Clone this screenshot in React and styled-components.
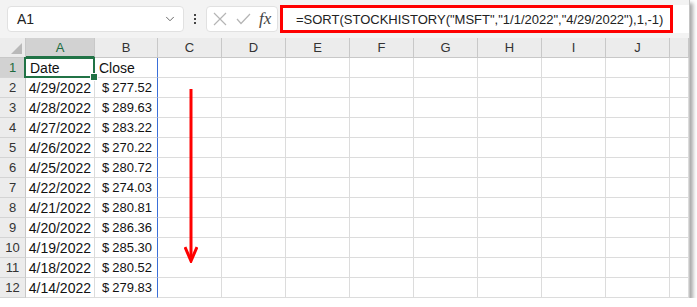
import React from 'react';
import styled, { createGlobalStyle } from 'styled-components';
import { ChevronDown } from 'lucide-react';

const GlobalStyle = createGlobalStyle`
  body {
    margin: 0;
    background: #ffffff;
    font-family: "Liberation Sans", Arial, sans-serif;
  }
`;

const Frame = styled.div`
  position: relative;
  width: 690px;
  height: 298px;
  overflow: hidden;
  background: #ffffff;
  border-right: 1px solid #c4c4c4;
  box-sizing: border-box;
  box-shadow: 3px 3px 4px rgba(0, 0, 0, 0.35);
`;

const Toolbar = styled.div`
  height: 38px;
  display: flex;
  align-items: center;
  background: #f3f3f3;
  padding-left: 7px;
  box-sizing: border-box;
`;

const NameBox = styled.div`
  width: 177px;
  height: 26px;
  box-sizing: border-box;
  background: #ffffff;
  border: 1px solid #e1e1e1;
  border-radius: 4px;
  display: flex;
  align-items: center;
  justify-content: space-between;
  padding: 0 6px 0 9px;
  font-size: 14px;
  color: #222;
`;

const Dots = styled.div`
  width: 22px;
  display: flex;
  flex-direction: column;
  align-items: center;
  gap: 2px;

  span {
    width: 2px;
    height: 2px;
    background: #444;
  }
`;

const IconBox = styled.div`
  width: 72px;
  height: 26px;
  box-sizing: border-box;
  background: #ffffff;
  border: 1px solid #e1e1e1;
  border-radius: 4px;
  display: flex;
  align-items: center;
  gap: 9px;
  padding-left: 6px;
`;

const Fx = styled.span`
  font-family: "Liberation Serif", "Times New Roman", serif;
  font-style: italic;
  font-size: 17px;
  color: #444;
  margin-left: -1px;
`;

const FormulaField = styled.div`
  flex: 1;
  height: 28px;
  margin-left: 2px;
  background: #ffffff;
  display: flex;
  align-items: center;
`;

const Highlight = styled.div`
  width: 393px;
  height: 28px;
  box-sizing: border-box;
  border: 3px solid #ff0000;
  display: flex;
  align-items: center;
  padding-left: 13px;
  font-size: 13px;
  color: #222;
  white-space: nowrap;
`;

const Grid = styled.div`
  display: grid;
  grid-template-columns: 26px 69px 63px repeat(8, 64px) 1fr;
  grid-auto-rows: 20px;
`;

const Corner = styled.div`
  position: relative;
  background: #ececec;
  border-right: 1px solid #c8c8c8;
  border-bottom: 1px solid #c8c8c8;
  box-sizing: border-box;

  &::after {
    content: '';
    position: absolute;
    right: 3px;
    bottom: 3px;
    border-style: solid;
    border-width: 0 0 11px 11px;
    border-color: transparent transparent #b9b9b9 transparent;
  }
`;

const ColHead = styled.div`
  display: flex;
  align-items: center;
  justify-content: center;
  box-sizing: border-box;
  font-size: 13px;
  background: ${(p) => (p.$active ? '#d2d2d2' : '#ececec')};
  color: ${(p) => (p.$active ? '#1d6b40' : '#333')};
  border-right: 1px solid #c8c8c8;
  border-bottom: ${(p) => (p.$active ? '2px solid #217346' : '1px solid #c8c8c8')};
`;

const RowHead = styled.div`
  display: flex;
  align-items: center;
  justify-content: center;
  box-sizing: border-box;
  font-size: 13px;
  background: ${(p) => (p.$active ? '#d2d2d2' : '#ececec')};
  color: ${(p) => (p.$active ? '#1d6b40' : '#333')};
  border-right: 1px solid #c8c8c8;
  border-bottom: 1px solid #d4d4d4;
`;

const Cell = styled.div`
  position: relative;
  display: flex;
  align-items: center;
  justify-content: ${(p) => p.$align || 'flex-start'};
  box-sizing: border-box;
  padding: 0 3px 0 4px;
  font-size: 14px;
  color: #111;
  white-space: nowrap;
  border-right: 1px solid ${(p) => (p.$spill ? '#3a6fd8' : '#dcdcdc')};
  border-bottom: 1px solid #dcdcdc;

  ${(p) =>
    p.$selected &&
    `
    &::before {
      content: '';
      position: absolute;
      inset: -1px -1px -1px -2px;
      border: 2px solid #217346;
      pointer-events: none;
    }
    &::after {
      content: '';
      position: absolute;
      right: -4px;
      bottom: -4px;
      width: 6px;
      height: 6px;
      background: #217346;
      border: 1px solid #fff;
      z-index: 2;
    }
  `}
`;

const Money = styled.span`
  flex: 1;
  display: flex;
  justify-content: space-between;
  padding: 0 2px 0 3px;
  font-size: 13px;
`;

const Arrow = styled.svg`
  position: absolute;
  left: 184px;
  top: 89px;
`;

const rows = [
  ['4/29/2022', '277.52'],
  ['4/28/2022', '289.63'],
  ['4/27/2022', '283.22'],
  ['4/26/2022', '270.22'],
  ['4/25/2022', '280.72'],
  ['4/22/2022', '274.03'],
  ['4/21/2022', '280.81'],
  ['4/20/2022', '286.36'],
  ['4/19/2022', '285.30'],
  ['4/18/2022', '280.52'],
  ['4/14/2022', '279.83'],
];

const cols = ['A', 'B', 'C', 'D', 'E', 'F', 'G', 'H', 'I', 'J', ''];

const emptyCells = (key) =>
  Array.from({ length: 9 }, (_, i) => <Cell key={`${key}-${i}`} />);

const App = () => (
  <>
    <GlobalStyle />
    <Frame>
      <Toolbar>
        <NameBox>
          A1
          <ChevronDown size={14} color="#555" strokeWidth={1.5} />
        </NameBox>
        <Dots>
          <span />
          <span />
          <span />
        </Dots>
        <IconBox>
          <svg width="14" height="14" viewBox="0 0 14 14">
            <path d="M1 1 L13 13 M13 1 L1 13" stroke="#b5b5b5" strokeWidth="1.2" fill="none" />
          </svg>
          <svg width="15" height="12" viewBox="0 0 15 12">
            <path d="M1 6 L5 10.5 L14 1" stroke="#b5b5b5" strokeWidth="1.2" fill="none" />
          </svg>
          <Fx>fx</Fx>
        </IconBox>
        <FormulaField>
          <Highlight>=SORT(STOCKHISTORY("MSFT","1/1/2022","4/29/2022"),1,-1)</Highlight>
        </FormulaField>
      </Toolbar>
      <Grid>
        <Corner />
        {cols.map((c, i) => (
          <ColHead key={c || 'k'} $active={i === 0}>
            {c}
          </ColHead>
        ))}
        <RowHead $active>1</RowHead>
        <Cell $selected>Date</Cell>
        <Cell $spill>Close</Cell>
        {emptyCells('r1')}
        {rows.map(([d, v], i) => (
          <React.Fragment key={d}>
            <RowHead>{i + 2}</RowHead>
            <Cell $align="flex-end">{d}</Cell>
            <Cell $spill>
              <Money>
                <span>$</span>
                <span>{v}</span>
              </Money>
            </Cell>
            {emptyCells(`r${i}`)}
          </React.Fragment>
        ))}
      </Grid>
      <Arrow width="14" height="174" viewBox="0 0 14 174">
        <path d="M7 0 V168" stroke="#ff0000" strokeWidth="3" />
        <path d="M1 158 L7 172 L13 158" stroke="#ff0000" strokeWidth="3" fill="none" strokeLinejoin="miter" />
      </Arrow>
    </Frame>
  </>
);

export default App;
